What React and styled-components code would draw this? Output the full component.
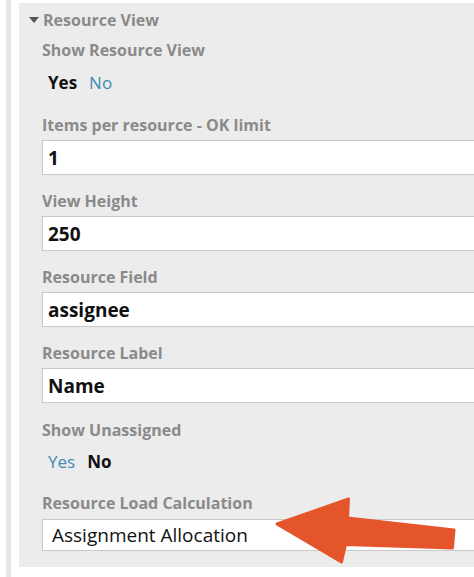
import styled, { createGlobalStyle } from "styled-components";

const GlobalStyle = createGlobalStyle`
  html, body {
    margin: 0;
    padding: 0;
    background: #fff;
    overflow: hidden;
  }
  body {
    font-family: "Open Sans", "Liberation Sans", sans-serif;
  }
`;

const Page = styled.div`
  position: relative;
  display: flex;
  width: 474px;
  height: 577px;
  overflow: hidden;
`;

const Rail = styled.div`
  width: 5px;
  margin-left: 6px;
  background: #e6e6e6;
  flex-shrink: 0;
`;

const Panel = styled.section`
  flex: 1;
  align-self: flex-start;
  margin: 3px 0 0 8px;
  padding: 7px 0 16px 23px;
  background: #ececec;
  display: flex;
  flex-direction: column;
`;

const Header = styled.div`
  display: flex;
  align-items: center;
  height: 20px;
  margin-left: -13px;
  gap: 4px;
  color: #8a8a8a;
  font-size: 16px;
  font-weight: 700;
`;

const Caret = styled.span`
  width: 0;
  height: 0;
  border-left: 5px solid transparent;
  border-right: 5px solid transparent;
  border-top: 6px solid #555;
`;

const Label = styled.div`
  height: 20px;
  line-height: 20px;
  margin-top: ${(p) => p.$top}px;
  color: #8a8a8a;
  font-size: 16px;
  font-weight: 700;
  white-space: nowrap;
`;

const Toggle = styled.div`
  display: flex;
  gap: 12px;
  height: 20px;
  line-height: 20px;
  margin-top: ${(p) => p.$top}px;
  padding-left: 6px;
  font-size: 17px;
`;

const Option = styled.span`
  color: ${(p) => (p.$active ? "#111" : "#3f8ab2")};
  font-weight: ${(p) => (p.$active ? 700 : 400)};
`;

const Input = styled.div`
  height: ${(p) => p.$h || 35}px;
  box-sizing: border-box;
  margin-top: ${(p) => p.$top}px;
  margin-right: -8px;
  display: flex;
  align-items: center;
  padding-left: ${(p) => (p.$plain ? 9 : 5)}px;
  background: #fff;
  border: 1px solid #c9c9c9;
  color: #111;
  font-size: 19px;
  font-weight: ${(p) => (p.$plain ? 400 : 700)};
`;

const Arrow = styled.svg`
  position: absolute;
  left: 0;
  top: 0;
  pointer-events: none;
`;

export default function App() {
  return (
    <Page>
      <GlobalStyle />
      <Rail />
      <Panel>
        <Header>
          <Caret />
          Resource View
        </Header>
        <Label $top={10}>Show Resource View</Label>
        <Toggle $top={13}>
          <Option $active>Yes</Option>
          <Option>No</Option>
        </Toggle>
        <Label $top={22}>Items per resource - OK limit</Label>
        <Input $top={5}>1</Input>
        <Label $top={16}>View Height</Label>
        <Input $top={5}>250</Input>
        <Label $top={16}>Resource Field</Label>
        <Input $top={5}>assignee</Input>
        <Label $top={16}>Resource Label</Label>
        <Input $top={5}>Name</Input>
        <Label $top={17}>Show Unassigned</Label>
        <Toggle $top={12}>
          <Option>Yes</Option>
          <Option $active>No</Option>
        </Toggle>
        <Label $top={21}>Resource Load Calculation</Label>
        <Input $top={6} $h={32} $plain>
          Assignment Allocation
        </Input>
      </Panel>
      <Arrow width="474" height="577" viewBox="0 0 474 577">
        <polygon
          points="277,524 348.5,499 347.5,518 454,530 452.5,548 345.5,544.5 341.5,562"
          fill="#e4552b"
          stroke="#e4552b"
          strokeWidth="3"
          strokeLinejoin="round"
        />
      </Arrow>
    </Page>
  );
}
